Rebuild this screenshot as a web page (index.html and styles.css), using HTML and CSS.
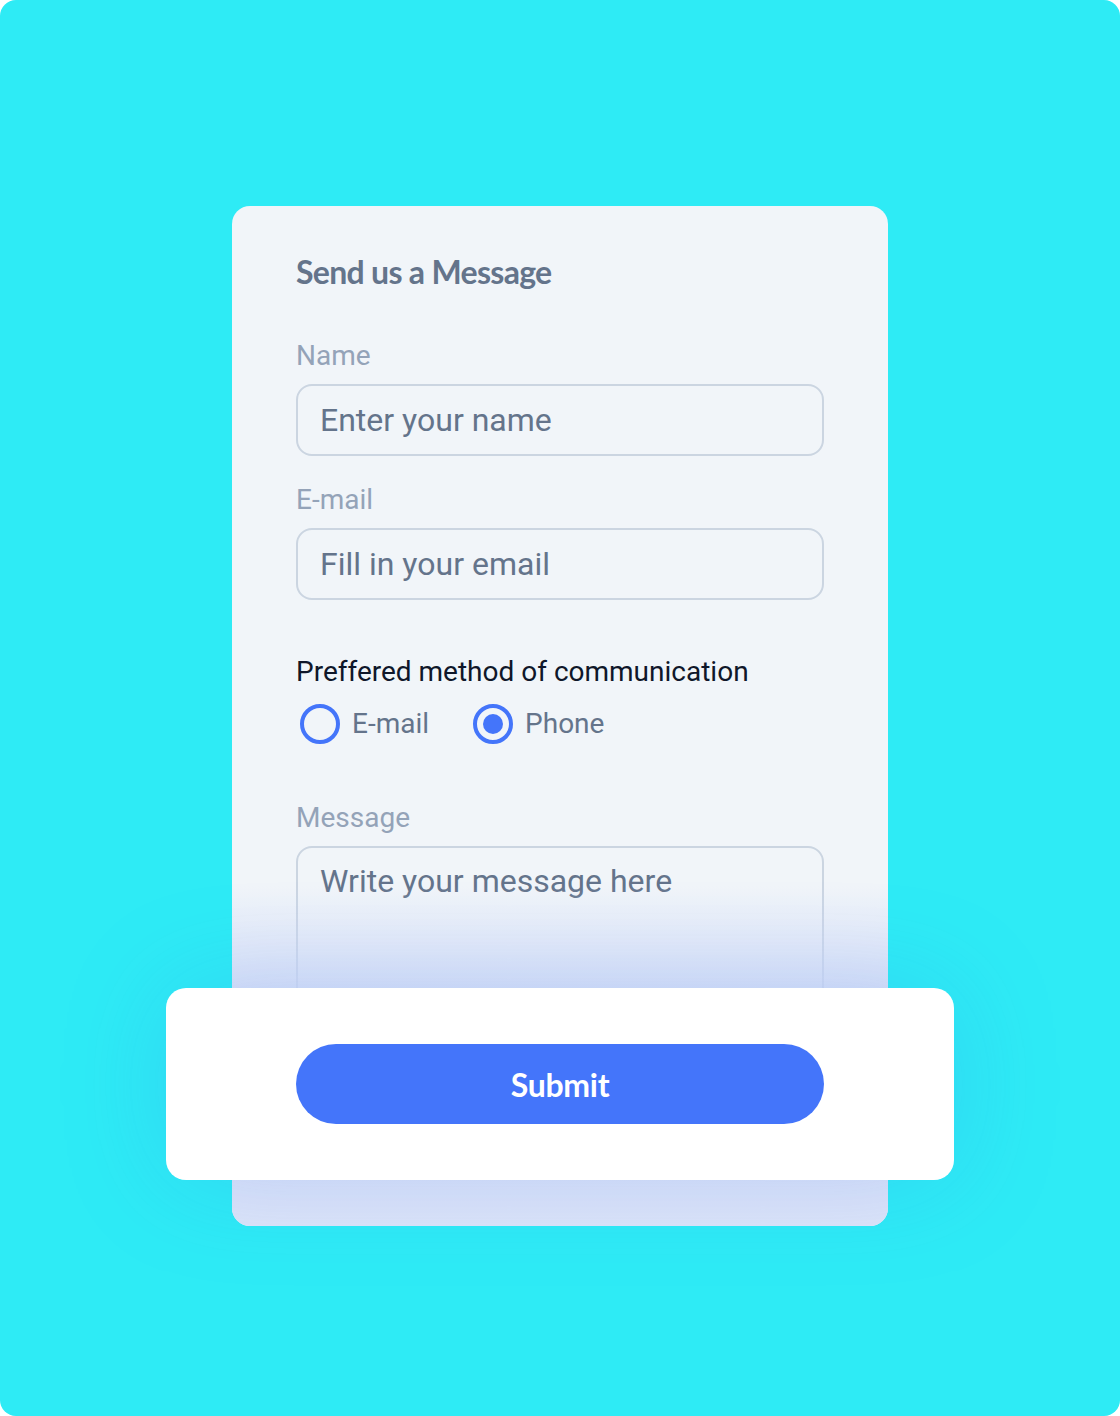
FILE: index.html
```html
<!DOCTYPE html>
<html lang="en">
<head>
<meta charset="utf-8">
<title>Send us a Message</title>
<link rel="stylesheet" href="styles.css">
</head>
<body>
<div class="frame">
  <div class="card">
    <h1 class="title">Send us a Message</h1>
    <div class="field">
      <label class="label">Name</label>
      <div class="input">Enter your name</div>
    </div>
    <div class="field">
      <label class="label">E-mail</label>
      <div class="input">Fill in your email</div>
    </div>
    <div class="method">
      <div class="method-title">Preffered method of communication</div>
      <div class="radios">
        <div class="radio"><span class="dot"></span><span class="radio-text">E-mail</span></div>
        <div class="radio checked"><span class="dot"></span><span class="radio-text">Phone</span></div>
      </div>
    </div>
    <div class="field message">
      <label class="label">Message</label>
      <div class="textarea">Write your message here</div>
    </div>
    <div class="fade"></div>
    <div class="panel">
      <button class="submit">Submit</button>
    </div>
  </div>
</div>
</body>
</html>
```

FILE: styles.css
```css
html, body {
  margin: 0;
  padding: 0;
  background: #ffffff;
}
.frame {
  width: 1120px;
  height: 1416px;
  background: #2EEBF5;
  border-radius: 16px;
  overflow: hidden;
  padding-top: 206px;
  box-sizing: border-box;
  font-family: Roboto, "Liberation Sans", sans-serif;
}
.card {
  position: relative;
  width: 656px;
  height: 1020px;
  margin: 0 auto;
  box-sizing: border-box;
  padding: 46px 64px 0;
  background: #F1F5F9;
  border-radius: 18px;
}
.title {
  margin: 0 0 48px;
  font-family: Lato, "Open Sans", sans-serif;
  font-weight: 700;
  font-size: 32px;
  line-height: 40px;
  color: #64748B;
  letter-spacing: -0.7px;
}
.field {
  display: flex;
  flex-direction: column;
  gap: 12px;
  margin-bottom: 28px;
}
.label {
  font-size: 28px;
  line-height: 32px;
  color: #94A3B8;
}
.input {
  height: 72px;
  box-sizing: border-box;
  border: 2px solid #CBD5E1;
  border-radius: 16px;
  padding: 0 22px;
  display: flex;
  align-items: center;
  font-size: 32px;
  color: #64748B;
}
.method {
  margin-top: 56px;
}
.method-title {
  font-size: 28px;
  line-height: 32px;
  color: #0F172A;
}
.radios {
  display: flex;
  gap: 44px;
  margin-top: 16px;
  padding-left: 4px;
}
.radio {
  display: flex;
  align-items: center;
  gap: 12px;
  height: 40px;
}
.dot {
  width: 40px;
  height: 40px;
  box-sizing: border-box;
  border: 4px solid #4475FA;
  border-radius: 50%;
  display: flex;
  align-items: center;
  justify-content: center;
}
.radio.checked .dot::after {
  content: "";
  width: 20px;
  height: 20px;
  border-radius: 50%;
  background: #4475FA;
}
.radio-text {
  font-size: 28px;
  line-height: 32px;
  color: #64748B;
}
.message {
  margin-top: 58px;
}
.textarea {
  height: 220px;
  box-sizing: border-box;
  border: 2px solid #CBD5E1;
  border-radius: 16px;
  padding: 14px 22px;
  font-size: 32px;
  color: #64748B;
}
.fade {
  position: absolute;
  left: 0;
  right: 0;
  top: 680px;
  bottom: 0;
  border-radius: 0 0 18px 18px;
  background: linear-gradient(to bottom,
    rgba(241, 245, 249, 0) 0px,
    rgba(208, 219, 247, 0.78) 102px,
    rgba(212, 222, 248, 0.85) 240px,
    rgba(222, 229, 248, 1) 340px);
}
.panel {
  position: absolute;
  left: -66px;
  top: 782px;
  width: 788px;
  height: 192px;
  box-sizing: border-box;
  padding: 56px 130px;
  background: #ffffff;
  border-radius: 20px;
  box-shadow: 0 0 110px rgba(60, 120, 240, 0.2);
}
.submit {
  display: block;
  width: 100%;
  height: 80px;
  border: none;
  border-radius: 40px;
  background: #4475FA;
  color: #ffffff;
  font-family: Lato, "Open Sans", sans-serif;
  font-weight: 700;
  font-size: 32px;
  letter-spacing: -0.3px;
  cursor: pointer;
}
```
